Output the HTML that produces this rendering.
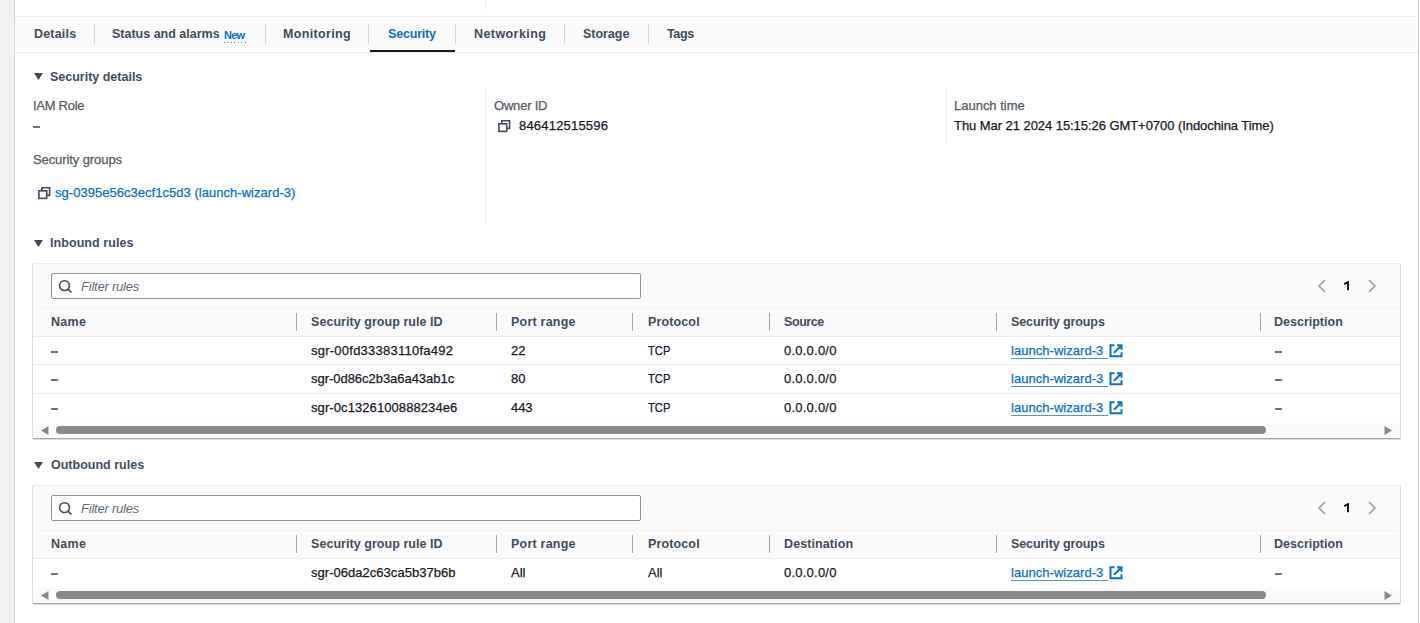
<!DOCTYPE html>
<html><head><meta charset="utf-8">
<style>
*{margin:0;padding:0;box-sizing:border-box}
html,body{width:1420px;height:623px;overflow:hidden;background:#fff}
body{position:relative;font-family:"Liberation Sans",sans-serif;color:#000716}
.a{position:absolute;white-space:nowrap}
.t{position:absolute;white-space:nowrap;line-height:16px;height:16px}
.b{font-weight:bold}
.tab{font-size:12.5px;font-weight:bold;color:#414d5c}
.lbl{font-size:13px;color:#545b64;-webkit-text-stroke:0.25px #545b64}
.val{font-size:13px;color:#16191f;-webkit-text-stroke:0.25px currentColor}
.hd{font-size:12.5px;font-weight:bold;color:#414d5c}
.cell{font-size:13px;color:#16191f;-webkit-text-stroke:0.25px currentColor}
.vd{position:absolute;width:1px;background:#d0d4d6}
.hl{position:absolute;height:1px;background:#e9ebed}
.lnk{color:#0a70c6}
.strip{background-color:#f2f3f3;background-image:conic-gradient(transparent 50%,#e8eaeb 50% 75%,transparent 75%);background-size:2px 2px}
</style></head><body>
<div class="a" style="left:0;top:0;width:14px;height:623px;background:#f2f3f3"></div>
<div class="a strip" style="left:0;top:0;width:12px;height:623px"></div>
<div class="a" style="left:14px;top:0;width:1px;height:623px;background:#cfd3d5"></div>
<div class="a" style="left:1418px;top:0;width:1px;height:623px;background:#cfd3d5"></div>
<div class="a" style="left:1419px;top:0;width:1px;height:623px;background:#f0f1f2"></div>
<div class="a" style="left:485px;top:0;width:1px;height:9px;background:#eceeef"></div>
<div class="a" style="left:15px;top:16px;width:1403px;height:37px;background:#fafafa;border-top:1px solid #eaeded;border-bottom:1px solid #eaeded"></div>
<div class="t tab" style="left:34px;top:26px;letter-spacing:0.183px;">Details</div>
<div class="t tab" style="left:112px;top:26px;letter-spacing:-0.006px;">Status and alarms</div>
<div class="t tab" style="left:283px;top:26px;letter-spacing:0.333px;">Monitoring</div>
<div class="t tab" style="left:388px;top:26px;letter-spacing:-0.186px;color:#0a70c6">Security</div>
<div class="t tab" style="left:474px;top:26px;letter-spacing:0.422px;">Networking</div>
<div class="t tab" style="left:583px;top:26px;letter-spacing:-0.033px;">Storage</div>
<div class="t tab" style="left:667px;top:26px;letter-spacing:-0.333px;">Tags</div>
<div class="t tab lnk" style="left:224px;top:27px;letter-spacing:-0.750px;font-size:11px">New</div>
<div class="a" style="left:224px;top:42px;width:1px;height:1px;background:#80868c"></div>
<div class="a" style="left:227px;top:42px;width:1px;height:1px;background:#80868c"></div>
<div class="a" style="left:231px;top:42px;width:1px;height:1px;background:#80868c"></div>
<div class="a" style="left:234px;top:42px;width:1px;height:1px;background:#80868c"></div>
<div class="a" style="left:238px;top:42px;width:1px;height:1px;background:#80868c"></div>
<div class="a" style="left:241px;top:42px;width:1px;height:1px;background:#80868c"></div>
<div class="a" style="left:245px;top:42px;width:1px;height:1px;background:#80868c"></div>
<div class="vd" style="left:94px;top:24px;height:20px"></div>
<div class="vd" style="left:265px;top:24px;height:20px"></div>
<div class="vd" style="left:368px;top:24px;height:20px"></div>
<div class="vd" style="left:455px;top:24px;height:20px"></div>
<div class="vd" style="left:564px;top:24px;height:20px"></div>
<div class="vd" style="left:648px;top:24px;height:20px"></div>
<div class="a" style="left:370px;top:50px;width:85px;height:2px;background:#16191f"></div>
<svg class="a" style="left:33px;top:72px" width="11" height="9" viewBox="0 0 11 9"><path d="M1 1h9L5.5 8z" fill="#414d5c"/></svg>
<div class="t hd" style="left:50px;top:69px;letter-spacing:-0.007px;">Security details</div>
<div class="t lbl" style="left:33px;top:98px;letter-spacing:-0.286px;">IAM Role</div>
<div class="a" style="left:33px;top:126px;width:7px;height:2px;background:#6b7380"></div>
<div class="t lbl" style="left:33px;top:152px;letter-spacing:-0.093px;">Security groups</div>
<svg class="a" style="left:37px;top:186px" width="14" height="14" viewBox="0 0 14 14"><path d="M4.8 4.8V1.8h7.8v7.6H9.7" fill="none" stroke="#414d5c" stroke-width="1.6"/><rect x="1.9" y="4.8" width="7.8" height="7.6" fill="none" stroke="#414d5c" stroke-width="1.6"/></svg>
<div class="t val lnk" style="left:55px;top:185px;letter-spacing:0.032px;">sg-0395e56c3ecf1c5d3 (launch-wizard-3)</div>
<div class="vd" style="left:485px;top:88px;height:135px;background:#e9ebed"></div>
<div class="t lbl" style="left:494px;top:98px;letter-spacing:-0.200px;">Owner ID</div>
<svg class="a" style="left:497px;top:119px" width="14" height="14" viewBox="0 0 14 14"><path d="M4.8 4.8V1.8h7.8v7.6H9.7" fill="none" stroke="#414d5c" stroke-width="1.6"/><rect x="1.9" y="4.8" width="7.8" height="7.6" fill="none" stroke="#414d5c" stroke-width="1.6"/></svg>
<div class="t val" style="left:519px;top:118px;letter-spacing:0.200px;">846412515596</div>
<div class="vd" style="left:946px;top:88px;height:55px;background:#e9ebed"></div>
<div class="t lbl" style="left:954px;top:98px;letter-spacing:-0.010px;">Launch time</div>
<div class="t val" style="left:954px;top:118px;letter-spacing:-0.057px;">Thu Mar 21 2024 15:15:26 GMT+0700 (Indochina Time)</div>
<div class="t hd" style="left:50px;top:235px;letter-spacing:0.067px;">Inbound rules</div>
<svg class="a" style="left:33px;top:239px" width="11" height="9" viewBox="0 0 11 9"><path d="M1 1h9L5.5 8z" fill="#414d5c"/></svg>
<div class="a" style="left:32px;top:263px;width:1369px;height:176px;background:#fafafa;border-top:1px solid #eaeded;border-left:1px solid #d9dde0;border-right:1px solid #d9dde0;border-bottom:1px solid #a3aab0;box-shadow:0 1px 0 #d9dcdf;border-radius:2px"></div>
<div class="a" style="left:51px;top:273px;width:590px;height:26px;background:#fff;border:1px solid #8f969b;border-radius:2px"></div>
<svg class="a" style="left:58px;top:279px" width="16" height="16" viewBox="0 0 16 16"><circle cx="6.5" cy="6.6" r="4.9" fill="none" stroke="#414d5c" stroke-width="1.6"/><path d="M10 10.1l3.4 3.4" stroke="#414d5c" stroke-width="1.7"/></svg>
<div class="t " style="left:81px;top:279px;letter-spacing:-0.218px;font-size:13px;font-style:italic;color:#5f6b7a">Filter rules</div>
<svg class="a" style="left:1316px;top:278px" width="12" height="16" viewBox="0 0 12 16"><path d="M9 2L3 8l6 6" fill="none" stroke="#979da2" stroke-width="1.6"/></svg>
<svg class="a" style="left:1343px;top:281px" width="8" height="10" viewBox="0 0 8 10"><path d="M1.2 3.1L5 1.1V9.3" fill="none" stroke="#0f141a" stroke-width="1.9"/></svg>
<svg class="a" style="left:1366px;top:278px" width="12" height="16" viewBox="0 0 12 16"><path d="M3 2l6 6-6 6" fill="none" stroke="#979da2" stroke-width="1.6"/></svg>
<div class="a" style="left:36px;top:308px;width:1362px;height:1px;background:repeating-linear-gradient(90deg,#e6e8e9 0 1px,transparent 1px 2px)"></div>
<div class="a" style="left:33px;top:337px;width:1367px;height:86px;background:#fff"></div>
<div class="hl" style="left:33px;top:336px;width:1367px"></div>
<div class="t hd" style="left:51px;top:314px;letter-spacing:0.300px;">Name</div>
<div class="vd" style="left:296px;top:313px;height:18px;background:#a3a8ad"></div>
<div class="t hd" style="left:311px;top:314px;letter-spacing:0.048px;">Security group rule ID</div>
<div class="vd" style="left:496px;top:313px;height:18px;background:#a3a8ad"></div>
<div class="t hd" style="left:511px;top:314px;letter-spacing:0.222px;">Port range</div>
<div class="vd" style="left:632px;top:313px;height:18px;background:#a3a8ad"></div>
<div class="t hd" style="left:648px;top:314px;letter-spacing:0.129px;">Protocol</div>
<div class="vd" style="left:769px;top:313px;height:18px;background:#a3a8ad"></div>
<div class="t hd" style="left:784px;top:314px;letter-spacing:-0.420px;">Source</div>
<div class="vd" style="left:996px;top:313px;height:18px;background:#a3a8ad"></div>
<div class="t hd" style="left:1011px;top:314px;letter-spacing:-0.093px;">Security groups</div>
<div class="vd" style="left:1260px;top:313px;height:18px;background:#a3a8ad"></div>
<div class="t hd" style="left:1274px;top:314px;">Description</div>
<div class="a" style="left:51px;top:351px;width:7px;height:2px;background:#6b7380"></div>
<div class="t cell" style="left:311px;top:343px;letter-spacing:0.240px;">sgr-00fd33383110fa492</div>
<div class="t cell" style="left:511px;top:343px;">22</div>
<div class="t cell" style="left:648px;top:343px;transform:scaleX(0.86);transform-origin:0 0">TCP</div>
<div class="t cell" style="left:784px;top:343px;letter-spacing:0.225px;">0.0.0.0/0</div>
<div class="t cell lnk" style="left:1011px;top:343px;letter-spacing:0.036px;">launch-wizard-3</div>
<div class="a" style="left:1011px;top:358px;width:97px;height:1px;background:#4a95dc"></div>
<svg class="a" style="left:1109px;top:344px" width="14" height="14" viewBox="0 0 14 14"><path d="M5.5 1.2h-4v11h11v-4" fill="none" stroke="#0a70c6" stroke-width="2"/><path d="M8 1.2h4.5V5.7M12.5 1.2L5 8.7" fill="none" stroke="#0a70c6" stroke-width="2"/></svg>
<div class="a" style="left:1275px;top:351px;width:7px;height:2px;background:#6b7380"></div>
<div class="hl" style="left:33px;top:364px;width:1367px"></div>
<div class="a" style="left:51px;top:379px;width:7px;height:2px;background:#6b7380"></div>
<div class="t cell" style="left:311px;top:371px;letter-spacing:-0.035px;">sgr-0d86c2b3a6a43ab1c</div>
<div class="t cell" style="left:511px;top:371px;">80</div>
<div class="t cell" style="left:648px;top:371px;transform:scaleX(0.86);transform-origin:0 0">TCP</div>
<div class="t cell" style="left:784px;top:371px;letter-spacing:0.225px;">0.0.0.0/0</div>
<div class="t cell lnk" style="left:1011px;top:371px;letter-spacing:0.036px;">launch-wizard-3</div>
<div class="a" style="left:1011px;top:386px;width:97px;height:1px;background:#4a95dc"></div>
<svg class="a" style="left:1109px;top:372px" width="14" height="14" viewBox="0 0 14 14"><path d="M5.5 1.2h-4v11h11v-4" fill="none" stroke="#0a70c6" stroke-width="2"/><path d="M8 1.2h4.5V5.7M12.5 1.2L5 8.7" fill="none" stroke="#0a70c6" stroke-width="2"/></svg>
<div class="a" style="left:1275px;top:379px;width:7px;height:2px;background:#6b7380"></div>
<div class="hl" style="left:33px;top:393px;width:1367px"></div>
<div class="a" style="left:51px;top:408px;width:7px;height:2px;background:#6b7380"></div>
<div class="t cell" style="left:311px;top:400px;letter-spacing:0.085px;">sgr-0c1326100888234e6</div>
<div class="t cell" style="left:511px;top:400px;letter-spacing:-0.100px;">443</div>
<div class="t cell" style="left:648px;top:400px;transform:scaleX(0.86);transform-origin:0 0">TCP</div>
<div class="t cell" style="left:784px;top:400px;letter-spacing:0.225px;">0.0.0.0/0</div>
<div class="t cell lnk" style="left:1011px;top:400px;letter-spacing:0.036px;">launch-wizard-3</div>
<div class="a" style="left:1011px;top:415px;width:97px;height:1px;background:#4a95dc"></div>
<svg class="a" style="left:1109px;top:401px" width="14" height="14" viewBox="0 0 14 14"><path d="M5.5 1.2h-4v11h11v-4" fill="none" stroke="#0a70c6" stroke-width="2"/><path d="M8 1.2h4.5V5.7M12.5 1.2L5 8.7" fill="none" stroke="#0a70c6" stroke-width="2"/></svg>
<div class="a" style="left:1275px;top:408px;width:7px;height:2px;background:#6b7380"></div>
<div class="a" style="left:33px;top:423px;width:1367px;height:13px;background:#fafafa"></div>
<svg class="a" style="left:40px;top:426px" width="10" height="10" viewBox="0 0 10 10"><path d="M8.5 0v9L1 4.5z" fill="#8a8a8a"/></svg>
<div class="a" style="left:56px;top:426px;width:1210px;height:8px;border-radius:4px;background:#8a8a8a"></div>
<svg class="a" style="left:1383px;top:426px" width="10" height="10" viewBox="0 0 10 10"><path d="M1.5 0v9L9 4.5z" fill="#8a8a8a"/></svg>
<div class="t hd" style="left:51px;top:457px;letter-spacing:0.008px;">Outbound rules</div>
<svg class="a" style="left:33px;top:461px" width="11" height="9" viewBox="0 0 11 9"><path d="M1 1h9L5.5 8z" fill="#414d5c"/></svg>
<div class="a" style="left:32px;top:485px;width:1369px;height:119px;background:#fafafa;border-top:1px solid #eaeded;border-left:1px solid #d9dde0;border-right:1px solid #d9dde0;border-bottom:1px solid #a3aab0;box-shadow:0 1px 0 #d9dcdf;border-radius:2px"></div>
<div class="a" style="left:51px;top:495px;width:590px;height:26px;background:#fff;border:1px solid #8f969b;border-radius:2px"></div>
<svg class="a" style="left:58px;top:501px" width="16" height="16" viewBox="0 0 16 16"><circle cx="6.5" cy="6.6" r="4.9" fill="none" stroke="#414d5c" stroke-width="1.6"/><path d="M10 10.1l3.4 3.4" stroke="#414d5c" stroke-width="1.7"/></svg>
<div class="t " style="left:81px;top:501px;letter-spacing:-0.218px;font-size:13px;font-style:italic;color:#5f6b7a">Filter rules</div>
<svg class="a" style="left:1316px;top:500px" width="12" height="16" viewBox="0 0 12 16"><path d="M9 2L3 8l6 6" fill="none" stroke="#979da2" stroke-width="1.6"/></svg>
<svg class="a" style="left:1343px;top:503px" width="8" height="10" viewBox="0 0 8 10"><path d="M1.2 3.1L5 1.1V9.3" fill="none" stroke="#0f141a" stroke-width="1.9"/></svg>
<svg class="a" style="left:1366px;top:500px" width="12" height="16" viewBox="0 0 12 16"><path d="M3 2l6 6-6 6" fill="none" stroke="#979da2" stroke-width="1.6"/></svg>
<div class="a" style="left:36px;top:530px;width:1362px;height:1px;background:repeating-linear-gradient(90deg,#e6e8e9 0 1px,transparent 1px 2px)"></div>
<div class="a" style="left:33px;top:559px;width:1367px;height:29px;background:#fff"></div>
<div class="hl" style="left:33px;top:558px;width:1367px"></div>
<div class="t hd" style="left:51px;top:536px;letter-spacing:0.300px;">Name</div>
<div class="vd" style="left:296px;top:535px;height:18px;background:#a3a8ad"></div>
<div class="t hd" style="left:311px;top:536px;letter-spacing:0.048px;">Security group rule ID</div>
<div class="vd" style="left:496px;top:535px;height:18px;background:#a3a8ad"></div>
<div class="t hd" style="left:511px;top:536px;letter-spacing:0.222px;">Port range</div>
<div class="vd" style="left:632px;top:535px;height:18px;background:#a3a8ad"></div>
<div class="t hd" style="left:648px;top:536px;letter-spacing:0.129px;">Protocol</div>
<div class="vd" style="left:769px;top:535px;height:18px;background:#a3a8ad"></div>
<div class="t hd" style="left:784px;top:536px;letter-spacing:0.100px;">Destination</div>
<div class="vd" style="left:996px;top:535px;height:18px;background:#a3a8ad"></div>
<div class="t hd" style="left:1011px;top:536px;letter-spacing:-0.093px;">Security groups</div>
<div class="vd" style="left:1260px;top:535px;height:18px;background:#a3a8ad"></div>
<div class="t hd" style="left:1274px;top:536px;">Description</div>
<div class="a" style="left:51px;top:573px;width:7px;height:2px;background:#6b7380"></div>
<div class="t cell" style="left:311px;top:565px;letter-spacing:0.030px;">sgr-06da2c63ca5b37b6b</div>
<div class="t cell" style="left:511px;top:565px;">All</div>
<div class="t cell" style="left:648px;top:565px;">All</div>
<div class="t cell" style="left:784px;top:565px;letter-spacing:0.225px;">0.0.0.0/0</div>
<div class="t cell lnk" style="left:1011px;top:565px;letter-spacing:0.036px;">launch-wizard-3</div>
<div class="a" style="left:1011px;top:580px;width:97px;height:1px;background:#4a95dc"></div>
<svg class="a" style="left:1109px;top:566px" width="14" height="14" viewBox="0 0 14 14"><path d="M5.5 1.2h-4v11h11v-4" fill="none" stroke="#0a70c6" stroke-width="2"/><path d="M8 1.2h4.5V5.7M12.5 1.2L5 8.7" fill="none" stroke="#0a70c6" stroke-width="2"/></svg>
<div class="a" style="left:1275px;top:573px;width:7px;height:2px;background:#6b7380"></div>
<div class="a" style="left:33px;top:588px;width:1367px;height:13px;background:#fafafa"></div>
<svg class="a" style="left:40px;top:591px" width="10" height="10" viewBox="0 0 10 10"><path d="M8.5 0v9L1 4.5z" fill="#8a8a8a"/></svg>
<div class="a" style="left:56px;top:591px;width:1210px;height:8px;border-radius:4px;background:#8a8a8a"></div>
<svg class="a" style="left:1383px;top:591px" width="10" height="10" viewBox="0 0 10 10"><path d="M1.5 0v9L9 4.5z" fill="#8a8a8a"/></svg>
</body></html>
